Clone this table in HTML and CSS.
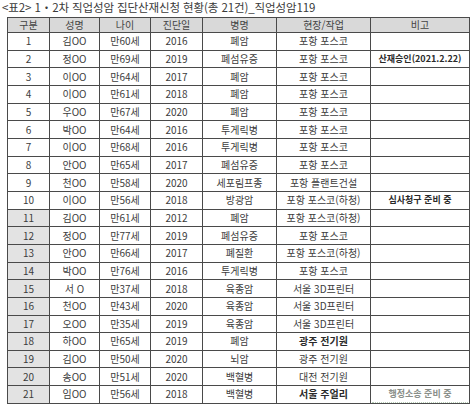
FILE: index.html
```html
<!DOCTYPE html>
<html lang="ko">
<head>
<meta charset="utf-8">
<link rel="stylesheet" href="styles.css">
</head>
<body>
<div class="title">&lt;표2&gt; 1・2차 직업성암 집단산재신청 현황(총 21건)_직업성암119</div>
<table class="tbl">
  <colgroup>
    <col class="c1"><col class="c2"><col class="c3"><col class="c4"><col class="c5"><col class="c6"><col class="c7">
  </colgroup>
  <thead>
    <tr><th>구분</th><th>성명</th><th>나이</th><th>진단일</th><th>병명</th><th>현장/작업</th><th>비고</th></tr>
  </thead>
  <tbody>
    <tr><td>1</td><td>김OO</td><td>만60세</td><td>2016</td><td>폐암</td><td>포항 포스코</td><td></td></tr>
    <tr><td>2</td><td>정OO</td><td>만69세</td><td>2019</td><td>폐섬유증</td><td>포항 포스코</td><td class="b">산재승인(2021.2.22)</td></tr>
    <tr><td>3</td><td>이OO</td><td>만64세</td><td>2017</td><td>폐암</td><td>포항 포스코</td><td></td></tr>
    <tr><td>4</td><td>이OO</td><td>만61세</td><td>2018</td><td>폐암</td><td>포항 포스코</td><td></td></tr>
    <tr><td>5</td><td>우OO</td><td>만67세</td><td>2020</td><td>폐암</td><td>포항 포스코</td><td></td></tr>
    <tr><td>6</td><td>박OO</td><td>만64세</td><td>2016</td><td>투게릭병</td><td>포항 포스코</td><td></td></tr>
    <tr><td>7</td><td>이OO</td><td>만68세</td><td>2016</td><td>투게릭병</td><td>포항 포스코</td><td></td></tr>
    <tr><td>8</td><td>안OO</td><td>만65세</td><td>2017</td><td>폐섬유증</td><td>포항 포스코</td><td></td></tr>
    <tr><td>9</td><td>천OO</td><td>만58세</td><td>2020</td><td>세포림프종</td><td>포항 플랜트건설</td><td></td></tr>
    <tr><td>10</td><td>이OO</td><td>만56세</td><td>2018</td><td>방광암</td><td>포항 포스코(하청)</td><td class="b">심사청구 준비 중</td></tr>
    <tr><td class="g">11</td><td>김OO</td><td>만61세</td><td>2012</td><td>폐암</td><td>포항 포스코(하청)</td><td></td></tr>
    <tr><td class="g">12</td><td>정OO</td><td>만77세</td><td>2019</td><td>폐섬유증</td><td>포항 포스코</td><td></td></tr>
    <tr><td class="g">13</td><td>안OO</td><td>만66세</td><td>2017</td><td>폐질환</td><td>포항 포스코(하청)</td><td></td></tr>
    <tr><td class="g">14</td><td>박OO</td><td>만76세</td><td>2016</td><td>투게릭병</td><td>포항 포스코</td><td></td></tr>
    <tr><td class="g">15</td><td>서 O</td><td>만37세</td><td>2018</td><td>육종암</td><td>서울 3D프린터</td><td></td></tr>
    <tr><td class="g">16</td><td>천OO</td><td>만43세</td><td>2020</td><td>육종암</td><td>서울 3D프린터</td><td></td></tr>
    <tr><td class="g">17</td><td>오OO</td><td>만35세</td><td>2019</td><td>육종암</td><td>서울 3D프린터</td><td></td></tr>
    <tr><td class="g">18</td><td>하OO</td><td>만65세</td><td>2019</td><td>폐암</td><td class="bb">광주 전기원</td><td></td></tr>
    <tr><td class="g">19</td><td>김OO</td><td>만50세</td><td>2020</td><td>뇌암</td><td>광주 전기원</td><td></td></tr>
    <tr><td class="g">20</td><td>송OO</td><td>만51세</td><td>2020</td><td>백혈병</td><td>대전 전기원</td><td></td></tr>
    <tr><td class="g">21</td><td>임OO</td><td>만56세</td><td>2018</td><td>백혈병</td><td class="bb">서울 주얼리</td><td class="last"><span class="faded">행정소송 준비 중</span></td></tr>
  </tbody>
</table>
</body>
</html>
```
FILE: styles.css
```css
html, body {
  margin: 0;
  padding: 0;
  background: #ffffff;
}
body {
  font-family: "Noto Sans CJK KR", "Noto Sans", sans-serif;
  color: #3c3c3c;
  width: 474px;
  height: 413px;
  overflow: hidden;
}
.title {
  font-size: 11.5px;
  line-height: 15px;
  height: 16px;
  padding-left: 2px;
  color: #3a3a3a;
  letter-spacing: -0.1px;
  white-space: nowrap;
}
.tbl {
  margin: 1px 0 0 7px;
  border-collapse: collapse;
  table-layout: fixed;
  width: 462px;
  border: 1px solid #333;
}
.c1 { width: 42px; }
.c2 { width: 50px; }
.c3 { width: 51px; }
.c4 { width: 52px; }
.c5 { width: 74px; }
.c6 { width: 94px; }
.c7 { width: 99px; }
.tbl th, .tbl td {
  border: 1px solid #4a4a4a;
  padding: 0;
  text-align: center;
  font-size: 10px;
  line-height: 12px;
  white-space: nowrap;
  overflow: hidden;
}
.tbl th {
  background: #d9d9d9;
  font-weight: normal;
  height: 14px;
  color: #444;
}
.tbl tbody tr {
  height: 17.67px;
}
.tbl td.g {
  background: #e3e3e3;
}
.tbl td.b {
  font-weight: bold;
  font-size: 9px;
  color: #2a2a2a;
}
.tbl td.bb {
  font-weight: bold;
  color: #2a2a2a;
}
.tbl td.last {
  font-weight: bold;
  font-size: 9px;
}
.faded {
  color: #8a8f8a;
  border-bottom: 1px dotted #b8d0b8;
  padding: 0 16px 2px;
}
```
